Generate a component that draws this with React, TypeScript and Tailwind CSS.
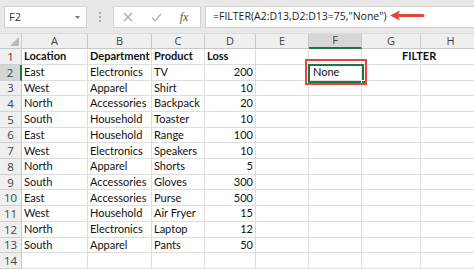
import React from "react";

type Row = { n: number; cells: string[]; bold?: boolean };

const rows: Row[] = [
  { n: 1, cells: ["Location", "Department", "Product", "Loss", "", "", "FILTER", ""], bold: true },
  { n: 2, cells: ["East", "Electronics", "TV", "200", "", "None", "", ""] },
  { n: 3, cells: ["West", "Apparel", "Shirt", "10", "", "", "", ""] },
  { n: 4, cells: ["North", "Accessories", "Backpack", "20", "", "", "", ""] },
  { n: 5, cells: ["South", "Household", "Toaster", "10", "", "", "", ""] },
  { n: 6, cells: ["East", "Household", "Range", "100", "", "", "", ""] },
  { n: 7, cells: ["West", "Electronics", "Speakers", "10", "", "", "", ""] },
  { n: 8, cells: ["North", "Apparel", "Shorts", "5", "", "", "", ""] },
  { n: 9, cells: ["South", "Accessories", "Gloves", "300", "", "", "", ""] },
  { n: 10, cells: ["East", "Accessories", "Purse", "500", "", "", "", ""] },
  { n: 11, cells: ["West", "Household", "Air Fryer", "15", "", "", "", ""] },
  { n: 12, cells: ["North", "Electronics", "Laptop", "12", "", "", "", ""] },
  { n: 13, cells: ["South", "Apparel", "Pants", "50", "", "", "", ""] },
  { n: 14, cells: ["", "", "", "", "", "", "", ""] },
];

const W = [
  "w-[66px]",
  "w-[64px]",
  "w-[53px]",
  "w-[51px]",
  "w-[53px]",
  "w-[53px]",
  "w-[59px]",
  "w-[60px]",
];

const letters = ["A", "B", "C", "D", "E", "F", "G", "H"];

export default function App() {
  return (
    <div className="relative w-[474px] h-[269px] overflow-hidden bg-white font-['Lato',sans-serif]">
      {/* Toolbar */}
      <div className="h-[33px] bg-[#e8e8e8] flex items-start pt-[6px]">
        <div className="ml-[4px] w-[83px] h-[22px] bg-white border border-[#d2d2d2] relative flex items-center pl-[4px] text-[11px] text-[#333] font-['Open_Sans',sans-serif]">
          F2
          <svg className="absolute right-[6px] top-[9px]" width="5" height="3" viewBox="0 0 5 3">
            <polygon points="0,0 5,0 2.5,3" fill="#777" />
          </svg>
        </div>
        <div className="w-[26px] h-[22px] flex flex-col items-center justify-center gap-[2px]">
          <div className="w-[2px] h-[2px] bg-[#9a9a9a] rounded-full" />
          <div className="w-[2px] h-[2px] bg-[#9a9a9a] rounded-full" />
          <div className="w-[2px] h-[2px] bg-[#9a9a9a] rounded-full" />
        </div>
        <div className="w-[88px] h-[22px] bg-white border border-[#d6d6d6] flex items-center">
          <div className="w-[28px] flex justify-center">
            <svg width="10" height="10" viewBox="0 0 10 10">
              <path d="M1 1 L9 9 M9 1 L1 9" stroke="#a8a8a8" strokeWidth="1.1" />
            </svg>
          </div>
          <div className="w-[28px] flex justify-center">
            <svg width="11" height="9" viewBox="0 0 11 9">
              <path d="M1 4.5 L4 7.8 L10 1" stroke="#b0b0b0" strokeWidth="1.2" fill="none" />
            </svg>
          </div>
          <div className="w-[28px] flex justify-center text-[12px] italic text-[#555] font-['Liberation_Serif',serif] leading-none">
            fx
          </div>
        </div>
        <div className="ml-[4px] flex-1 h-[22px] bg-white border border-r-0 border-[#d2d2d2] flex items-center pl-[7px] text-[10.5px] text-[#222] font-['Open_Sans',sans-serif] whitespace-nowrap">
          =FILTER(A2:D13,D2:D13=75,"None")
        </div>
      </div>

      {/* Column header row */}
      <div className="flex h-[16.3px] bg-[#efefef] border-t border-[#dcdcdc]">
        <div className="w-[22px] shrink-0 relative border-r border-b border-[#c8c8c8]">
          <svg className="absolute right-[2px] bottom-[2px]" width="9" height="9" viewBox="0 0 9 9">
            <polygon points="9,0 9,9 0,9" fill="#b9b9b9" />
          </svg>
        </div>
        {letters.map((l, i) => (
          <div
            key={l}
            className={
              i === 5
                ? `${W[i]} shrink-0 flex items-center justify-center text-[11px] text-[#444] font-['Open_Sans',sans-serif] bg-[#d6d6d6] border-r border-[#c8c8c8] border-b-2 border-b-[#217346]`
                : `${W[i]} shrink-0 flex items-center justify-center text-[11px] text-[#444] font-['Open_Sans',sans-serif] border-r border-b border-[#c8c8c8]`
            }
          >
            {l}
          </div>
        ))}
      </div>

      {/* Rows */}
      {rows.map((r) => (
        <div key={r.n} className="flex h-[15.7px]">
          <div
            className={
              r.n === 2
                ? "w-[22px] shrink-0 flex items-center justify-center text-[11.5px] text-[#444] font-['Open_Sans',sans-serif] bg-[#d6d6d6] border-b border-[#d0d0d0] border-r-2 border-r-[#217346]"
                : "w-[22px] shrink-0 flex items-center justify-center text-[11.5px] text-[#444] font-['Open_Sans',sans-serif] bg-[#efefef] border-b border-[#d0d0d0] border-r border-r-[#c8c8c8]"
            }
          >
            {r.n}
          </div>
          {r.cells.map((c, i) => {
            const isNum = i === 3 && !r.bold;
            const isFilter = r.bold && i === 6;
            return (
              <div
                key={i}
                className={`${W[i]} shrink-0 flex items-center border-r border-b border-[#dedede] text-[11px] text-[#111] whitespace-nowrap ${
                  r.bold ? "font-bold" : ""
                } ${isNum ? "justify-end pr-[2px]" : i === 5 ? "pl-[4px]" : isFilter ? "pl-[40px]" : "pl-[2px]"}`}
              >
                {c}
              </div>
            );
          })}
        </div>
      ))}

      {/* Selection */}
      <div className="absolute left-[308px] top-[64px] w-[56px] h-[19px] border-2 border-[#217346]">
        <div className="absolute right-[-4px] bottom-[-4px] w-[5px] h-[5px] bg-[#217346] border border-white" />
      </div>

      {/* Red annotation box */}
      <div className="absolute left-[305px] top-[59px] w-[62px] h-[26px] border-2 border-[#e4463c]" />

      {/* Red arrow */}
      <svg className="absolute left-[390px] top-[10px]" width="36" height="11" viewBox="0 0 36 11">
        <path d="M7 5.5 L33 5.5" stroke="#e4463c" strokeWidth="3" strokeLinecap="round" />
        <polygon points="0,5.5 10,0.5 8,5.5 10,10.5" fill="#e4463c" />
      </svg>
    </div>
  );
}
